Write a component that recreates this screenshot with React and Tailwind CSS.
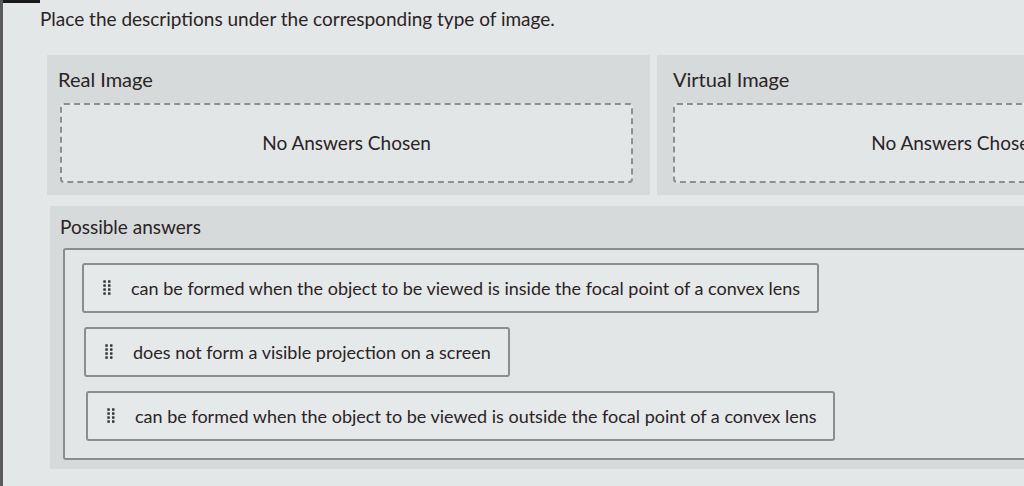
import React from 'react'

function Grip() {
  return (
    <svg width="8" height="16" viewBox="0 0 8 16" className="shrink-0">
      {[1.5, 5.5, 9.5, 13.5].map((y) => (
        <g key={y} fill="#3a3438">
          <rect x="0.3" y={y - 1.2} width="2.5" height="2.5" />
          <rect x="5" y={y - 1.2} width="2.5" height="2.5" />
        </g>
      ))}
    </svg>
  )
}

function DropPanel({ title, shift }) {
  return (
    <div className="w-[603px] shrink-0 h-[140px] bg-[#d6dada] flex flex-col">
      <div className={`h-[48px] flex items-center text-[20px] text-[#2b2326] ${shift ? 'pl-[16px]' : 'pl-[11px]'}`}>
        {title}
      </div>
      <div className={`h-[80px] border-2 border-dashed border-[#8f8f8f] rounded-[4px] bg-[#e2e6e6] flex items-center justify-center text-[19px] text-[#2b2326] ${shift ? 'ml-[16px] mr-[22px]' : 'ml-[13px] mr-[17px]'}`}>
        No Answers Chosen
      </div>
    </div>
  )
}

function Answer({ text, ml }) {
  return (
    <div className={`self-start h-[50px] flex items-center gap-[20px] pl-[19px] pr-[17px] border-2 border-[#8d8d8d] rounded-[3px] bg-[#e6e9e9] text-[18px] text-[#2b2326] ${ml}`}>
      <Grip />
      <span>{text}</span>
    </div>
  )
}

export default function App() {
  return (
    <div className="w-[1024px] h-[486px] overflow-hidden bg-[#e3e7e7] border-l-[3px] border-[#5a5a5a] font-['Lato','Liberation_Sans',sans-serif]">
      <div className="w-[40px] h-[3px] bg-[#1a1a1a] -ml-[3px]"></div>
      <h1 className="pl-[37px] pt-[4px] text-[19px] text-[#2b2326] leading-[24px]">
        Place the descriptions under the corresponding type of image.
      </h1>
      <div className="flex gap-[7px] ml-[44px] mt-[24px]">
        <DropPanel title="Real Image" />
        <DropPanel title="Virtual Image" shift />
      </div>
      <div className="ml-[47px] mt-[11px] bg-[#d6dada] pb-[9px]">
        <div className="h-[42px] flex items-center pl-[10px] text-[19px] text-[#2b2326]">
          Possible answers
        </div>
        <div className="ml-[13px] border-t-2 border-l-2 border-b-2 border-[#8c8c8c] rounded-l-[3px] bg-[#e2e6e6] pt-[13px] pb-[17px] flex flex-col gap-[14px]">
          <Answer ml="ml-[17px]" text="can be formed when the object to be viewed is inside the focal point of a convex lens" />
          <Answer ml="ml-[19px]" text="does not form a visible projection on a screen" />
          <Answer ml="ml-[21px]" text="can be formed when the object to be viewed is outside the focal point of a convex lens" />
        </div>
      </div>
    </div>
  )
}
